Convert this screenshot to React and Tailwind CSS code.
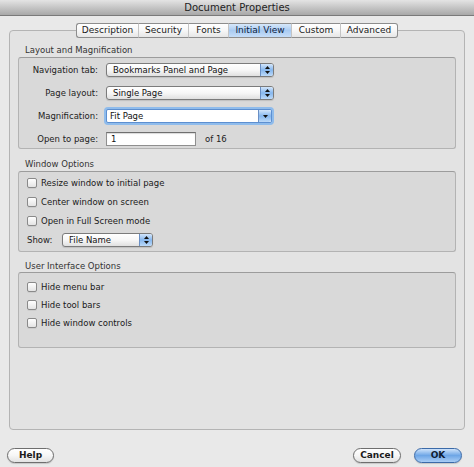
import React from "react";

function Arrows({ single }) {
  return (
    <div className="flex w-[13px] flex-col items-center justify-center gap-[1.5px] rounded-r-[2px] border-l border-[#6a8fc4] bg-linear-to-b from-[#d3e6fb] via-[#86b7ee] to-[#bcdaf9]">
      {!single && (
        <svg width="5" height="3" viewBox="0 0 5 3">
          <path d="M2.5 0L5 3H0z" fill="#111" />
        </svg>
      )}
      <svg width="5" height="3" viewBox="0 0 5 3">
        <path d="M0 0H5L2.5 3z" fill="#111" />
      </svg>
    </div>
  );
}

function Popup({ text, width }) {
  return (
    <div
      className={`flex h-[14px] ${width} items-stretch rounded-[3px] border border-[#7b7b7b] bg-linear-to-b from-white via-[#f7f7f7] to-[#e0e0e0] shadow-[0_1px_1px_rgba(0,0,0,0.12)]`}
    >
      <div className="flex flex-1 items-center pl-[6px] text-[8.5px] leading-none text-[#111]">
        {text}
      </div>
      <Arrows />
    </div>
  );
}

function Label({ children }) {
  return (
    <div className="w-[79px] shrink-0 text-right text-[8.5px] leading-none text-[#222]">
      {children}
    </div>
  );
}

function Checkbox({ label }) {
  return (
    <div className="flex h-[14px] items-center gap-[4px]">
      <div className="h-[10px] w-[10px] rounded-[2px] border border-[#8a8a8a] bg-linear-to-b from-white to-[#e4e4e4] shadow-[0_1px_0_rgba(0,0,0,0.06)]" />
      <span className="text-[8.5px] leading-none text-[#1a1a1a]">{label}</span>
    </div>
  );
}

function GroupLabel({ children }) {
  return (
    <div className="h-[12px] pl-[7px] text-[8.5px] leading-[12px] text-[#333]">
      {children}
    </div>
  );
}

function Tab({ children, width, active, first, last }) {
  return (
    <div
      className={`flex h-[15px] ${width} items-center justify-center border-y border-[#8d8d8d] text-[9px] leading-none ${
        first ? "rounded-l-[3px] border-l" : "border-l border-l-[#c4c4c4]"
      } ${last ? "rounded-r-[3px] border-r" : ""} ${
        active
          ? "bg-linear-to-b from-[#d7e8fa] via-[#a9cbf2] to-[#c7def8] text-[#0c2140]"
          : "bg-linear-to-b from-white via-[#f7f7f7] to-[#e6e6e6] text-[#1a1a1a]"
      }`}
    >
      {children}
    </div>
  );
}

function Button({ children, width, primary }) {
  return (
    <div
      className={`flex h-[15px] ${width} items-center justify-center rounded-full border text-[9px] font-bold leading-none ${
        primary
          ? "border-[#3b6aa8] bg-linear-to-b from-[#cfe3fa] via-[#6ea6e6] to-[#a9cdf5] text-[#0f1d33]"
          : "border-[#6e6e6e] bg-linear-to-b from-white via-[#f6f6f6] to-[#e2e2e2] text-[#1a1a1a]"
      } shadow-[0_1px_1px_rgba(0,0,0,0.15)]`}
    >
      {children}
    </div>
  );
}

export default function App() {
  return (
    <div className="flex h-[467px] w-[474px] flex-col bg-[#e9e9e9] font-['DejaVu_Sans','Liberation_Sans',sans-serif]">
      {/* Title bar */}
      <div className="flex h-[16px] shrink-0 items-center justify-center border-b border-[#7a7a7a] bg-linear-to-b from-[#e4e4e4] to-[#a8a8a8] text-[10px] leading-none text-[#222]">
        Document Properties
      </div>

      {/* Tabs */}
      <div className="relative z-10 mt-[7px] flex justify-center">
        <Tab width="w-[62px]" first>Description</Tab>
        <Tab width="w-[50px]">Security</Tab>
        <Tab width="w-[40px]">Fonts</Tab>
        <Tab width="w-[63px]" active>Initial View</Tab>
        <Tab width="w-[49px]">Custom</Tab>
        <Tab width="w-[58px]" last>Advanced</Tab>
      </div>

      {/* Panel */}
      <div className="mx-[9px] -mt-[8px] flex h-[400px] flex-col rounded-[4px] border border-[#b4b4b4] bg-[#e3e3e3] px-[8px] pt-[13px]">
        <GroupLabel>Layout and Magnification</GroupLabel>
        <div className="mt-[1px] flex h-[92px] flex-col gap-[9px] rounded-[3px] border border-[#b3b3b3] border-t-[#9c9c9c] bg-[#d9d9d9] pt-[5px]">
          <div className="flex h-[14px] items-center gap-[8px]">
            <Label>Navigation tab:</Label>
            <Popup text="Bookmarks Panel and Page" width="w-[168px]" />
          </div>
          <div className="flex h-[14px] items-center gap-[8px]">
            <Label>Page layout:</Label>
            <Popup text="Single Page" width="w-[168px]" />
          </div>
          <div className="flex h-[14px] items-center gap-[8px]">
            <Label>Magnification:</Label>
            <div className="flex h-[14px] w-[166px] items-stretch rounded-[2px] border border-[#5d8fd0] bg-white shadow-[0_0_0_2px_#8fbcec]">
              <div className="flex flex-1 items-center pl-[3px] text-[8.5px] leading-none text-[#111]">
                Fit Page
              </div>
              <Arrows single />
            </div>
          </div>
          <div className="flex h-[14px] items-center gap-[8px]">
            <Label>Open to page:</Label>
            <div className="flex h-[14px] w-[90px] items-center border border-[#8f8f8f] border-t-[#6f6f6f] bg-white pl-[4px] text-[8.5px] leading-none text-[#111] shadow-[inset_0_1px_1px_rgba(0,0,0,0.15)]">
              1
            </div>
            <span className="ml-[1px] text-[8.5px] leading-none text-[#222]">of 16</span>
          </div>
        </div>

        <div className="mt-[9px]">
          <GroupLabel>Window Options</GroupLabel>
        </div>
        <div className="mt-[1px] flex h-[81px] flex-col gap-[5px] rounded-[3px] border border-[#b3b3b3] border-t-[#9c9c9c] bg-[#d9d9d9] pl-[8px] pt-[4px]">
          <Checkbox label="Resize window to initial page" />
          <Checkbox label="Center window on screen" />
          <Checkbox label="Open in Full Screen mode" />
          <div className="flex h-[14px] items-center">
            <span className="w-[35px] text-[8.5px] leading-none text-[#222]">Show:</span>
            <Popup text="File Name" width="w-[91px]" />
          </div>
        </div>

        <div className="mt-[8px]">
          <GroupLabel>User Interface Options</GroupLabel>
        </div>
        <div className="mt-[0px] flex h-[76px] flex-col gap-[4px] rounded-[3px] border border-[#b3b3b3] border-t-[#9c9c9c] bg-[#d9d9d9] pl-[8px] pt-[7px]">
          <Checkbox label="Hide menu bar" />
          <Checkbox label="Hide tool bars" />
          <Checkbox label="Hide window controls" />
        </div>
      </div>

      {/* Buttons */}
      <div className="mt-[18px] flex items-center pl-[7px] pr-[12px]">
        <Button width="w-[47px]">Help</Button>
        <div className="flex-1" />
        <Button width="w-[48px]">Cancel</Button>
        <div className="w-[13px]" />
        <Button width="w-[48px]" primary>OK</Button>
      </div>
    </div>
  );
}
